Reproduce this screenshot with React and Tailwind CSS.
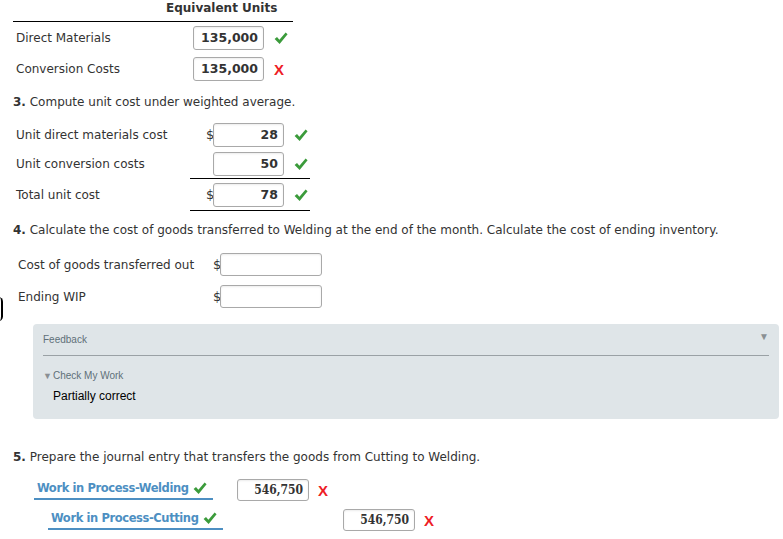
import React from "react";

const Check = ({ className = "" }) => (
  <svg width="14" height="13" viewBox="0 0 14 13" className={"shrink-0 " + className}>
    <path d="M0.6 7 L3 5 L5.4 7.8 L11.6 0.6 L13.6 2.3 L5.6 12 Z" fill="#3b9b3b" />
  </svg>
);

const Cross = ({ className = "" }) => (
  <span
    className={"text-[15px] font-bold leading-none text-[#ee1c25] " + className}
    style={{ fontFamily: "'Liberation Sans', Arial, sans-serif" }}
  >
    X
  </span>
);

const Box = ({ value, w = "w-[71px]", h = "h-[24px]", serif = false }) => (
  <div
    className={`${w} ${h} flex shrink-0 items-center justify-end rounded-[3px] border border-[#a9a9a9] bg-white pr-[5px] shadow-[inset_0_1px_2px_rgba(0,0,0,0.08)] font-bold text-[#333] ${
      serif ? "text-[12px]" : "text-[12.5px]"
    }`}
    style={serif ? { fontFamily: "'DejaVu Serif Condensed','DejaVu Serif', 'Liberation Serif', serif" } : undefined}
  >
    {value}
  </div>
);

export default function App() {
  return (
    <div
      className="relative h-[539px] w-[783px] overflow-hidden bg-white text-[12px] text-[#333]"
      style={{ fontFamily: "'DejaVu Sans', Verdana, sans-serif" }}
    >
      <div className="pl-[13px]">
        {/* Section 2 table */}
        <div className="w-[280px]">
          <div className="border-b border-black pb-[5px] pl-[153px] pt-0 font-bold leading-[16px]">
            Equivalent Units
          </div>
          <div className="mt-[4px] flex h-[24px] items-center">
            <div className="w-[180px] pl-[3px]">Direct Materials</div>
            <Box value="135,000" />
            <Check className="ml-[10px]" />
          </div>
          <div className="mt-[7px] flex h-[24px] items-center">
            <div className="w-[180px] pl-[3px]">Conversion Costs</div>
            <Box value="135,000" />
            <Cross className="ml-[10px]" />
          </div>
        </div>

        {/* Section 3 */}
        <div className="mt-[13px] leading-[16px]">
          <span className="font-bold">3.</span> Compute unit cost under weighted average.
        </div>
        <div className="mt-[13px] w-[297px]">
          <div className="flex h-[24px] items-center">
            <div className="w-[193px] pl-[3px]">Unit direct materials cost</div>
            <div className="w-[7px] text-[13px]">$</div>
            <Box value="28" />
            <Check className="ml-[10px]" />
          </div>
          <div className="mt-[5px] flex h-[24px] items-center">
            <div className="w-[200px] pl-[3px]">Unit conversion costs</div>
            <Box value="50" />
            <Check className="ml-[10px]" />
          </div>
          <div className="ml-[177px] mt-[2px] h-[1px] w-[120px] bg-black" />
          <div className="mt-[4px] flex h-[24px] items-center">
            <div className="w-[193px] pl-[3px]">Total unit cost</div>
            <div className="w-[7px] text-[13px]">$</div>
            <Box value="78" />
            <Check className="ml-[10px]" />
          </div>
          <div className="ml-[177px] mt-[3px] h-[1px] w-[120px] bg-black" />
        </div>

        {/* Section 4 */}
        <div className="mt-[11px] leading-[16px]">
          <span className="font-bold">4.</span> Calculate the cost of goods transferred to Welding at the end of the month. Calculate the cost of ending inventory.
        </div>
        <div className="mt-[15px] flex h-[23px] items-center pl-[5px]">
          <div className="w-[195px]">Cost of goods transferred out</div>
          <div className="w-[7px] text-[13px]">$</div>
          <Box value="" w="w-[102px]" h="h-[23px]" />
        </div>
        <div className="mt-[9px] flex h-[23px] items-center pl-[5px]">
          <div className="w-[195px]">Ending WIP</div>
          <div className="w-[7px] text-[13px]">$</div>
          <Box value="" w="w-[102px]" h="h-[23px]" />
        </div>
      </div>

      {/* left edge mark */}
      <div className="absolute left-[-6px] top-[297px] h-[24px] w-[9px] rounded-full border-r-[2px] border-black" />

      {/* Feedback panel */}
      <div
        className="mx-[33px] mr-[4px] mt-[16px] h-[95px] rounded-[4px] bg-[#dfe5e8] px-[10px] pt-[8px]"
        style={{ fontFamily: "'Liberation Sans', Arial, sans-serif" }}
      >
        <div className="flex h-[14px] items-start justify-between">
          <div className="pt-[2px] text-[10px] leading-[12px] text-[#607078]">Feedback</div>
          <div className="text-[10px] leading-[10px] text-[#8a8f93]">▼</div>
        </div>
        <div className="mt-[9px] h-[1px] bg-[#9aa1a5]" />
        <div className="mt-[14px] flex items-center text-[10px] leading-[12px] text-[#607078]">
          <span className="mr-[1px] text-[9px] leading-[10px] text-[#8a8f93]">▼</span>Check My Work
        </div>
        <div className="mt-[7px] pl-[10px] text-[12px] leading-[14px] text-black">Partially correct</div>
      </div>

      {/* Section 5 */}
      <div className="pl-[13px]">
        <div className="mt-[30px] leading-[16px]">
          <span className="font-bold">5.</span> Prepare the journal entry that transfers the goods from Cutting to Welding.
        </div>
        <div className="mt-[14px] flex h-[22px] items-center">
          <div className="ml-[21px] flex w-[179px] shrink-0 items-center gap-[4px] whitespace-nowrap border-b-2 border-[#4d8fc2] pb-[1px] pl-[3px] text-[11.5px] font-bold tracking-[-0.4px] text-[#4d8fc2]">
            Work in Process-Welding <Check />
          </div>
          <div className="ml-[24px]">
            <Box value="546,750" w="w-[72px]" h="h-[22px]" serif />
          </div>
          <Cross className="ml-[9px]" />
        </div>
        <div className="mt-[8px] flex h-[22px] items-center">
          <div className="ml-[35px] flex w-[175px] shrink-0 items-center gap-[4px] whitespace-nowrap border-b-2 border-[#4d8fc2] pb-[1px] pl-[3px] text-[11.5px] font-bold tracking-[-0.4px] text-[#4d8fc2]">
            Work in Process-Cutting <Check />
          </div>
          <div className="ml-[120px]">
            <Box value="546,750" w="w-[72px]" h="h-[22px]" serif />
          </div>
          <Cross className="ml-[9px]" />
        </div>
      </div>
    </div>
  );
}
